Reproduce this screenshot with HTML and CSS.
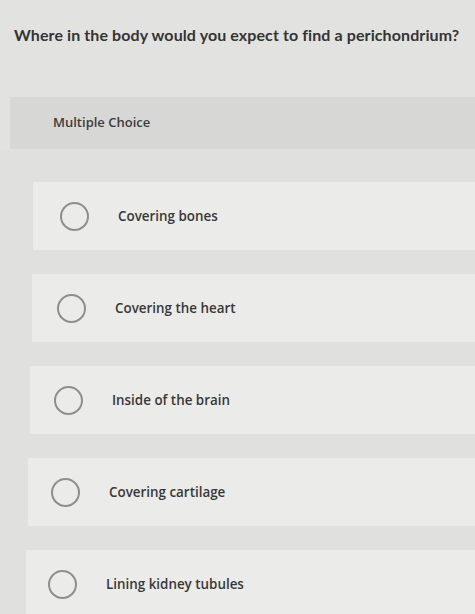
FILE: index.html
```html
<!DOCTYPE html>
<html>
<head>
<meta charset="utf-8">
<link rel="stylesheet" href="styles.css">
</head>
<body>
<div class="page">
  <h1 class="question">Where in the body would you expect to find a perichondrium?</h1>
  <div class="band">Multiple Choice</div>
  <div class="options">
    <div class="option o1"><span class="radio"></span><span class="label">Covering bones</span></div>
    <div class="option o2"><span class="radio"></span><span class="label">Covering the heart</span></div>
    <div class="option o3"><span class="radio"></span><span class="label">Inside of the brain</span></div>
    <div class="option o4"><span class="radio"></span><span class="label">Covering cartilage</span></div>
    <div class="option o5"><span class="radio"></span><span class="label">Lining kidney tubules</span></div>
  </div>
</div>
</body>
</html>
```

FILE: styles.css
```css
html, body {
  margin: 0;
  padding: 0;
  background: #e2e2e0;
  width: 475px;
  height: 614px;
  overflow: hidden;
}
.page {
  font-family: "Open Sans", Lato, sans-serif;
  color: #3a3a3a;
}
.question {
  margin: 0;
  padding: 25px 0 0 14px;
  height: 72px;
  box-sizing: border-box;
  font-family: Lato, sans-serif;
  font-size: 16px;
  font-weight: 700;
  color: #343434;
  white-space: nowrap;
  letter-spacing: 0.1px;
}
.band {
  margin-left: 10px;
  height: 52px;
  background: #d7d7d5;
  box-sizing: border-box;
  padding: 16px 0 0 43px;
  font-size: 13px;
  font-weight: 600;
  color: #3c3c3c;
  margin-top: 25px;
}
.options {
  padding-top: 33px;
  display: flex;
  flex-direction: column;
  gap: 24px;
  background: #e0e0de;
}
.option {
  height: 68px;
  background: #ebebe9;
  display: flex;
  align-items: center;
  font-size: 13.4px;
  font-weight: 600;
  color: #383838;
}
.o1 { margin-left: 33px; padding-left: 27px; }
.o2 { margin-left: 32px; padding-left: 25px; }
.o3 { margin-left: 30px; padding-left: 24px; }
.o4 { margin-left: 28px; padding-left: 23px; }
.o5 { margin-left: 26px; padding-left: 22px; }
.radio {
  width: 25px;
  height: 25px;
  border: 2px solid #8e8e8c;
  border-radius: 50%;
  flex: none;
}
.label {
  margin-left: 29px;
  padding-bottom: 1px;
}
```
